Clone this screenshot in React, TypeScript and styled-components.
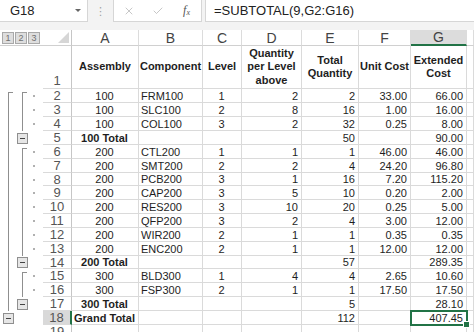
import React from 'react';
import styled, { createGlobalStyle, css } from 'styled-components';
import { X, Check } from 'lucide-react';

const GlobalStyle = createGlobalStyle`
  html, body { margin: 0; padding: 0; background: #fff; }
  body { font-family: "Liberation Sans", Arial, sans-serif; }
`;

const GREEN = '#217346';
const GRID = '#dadada';
const LINE = '#8f8f8f';

const Page = styled.div`
  width: 474px;
  height: 332px;
  overflow: hidden;
  display: flex;
  flex-direction: column;
  background: #fff;
`;

const FormulaBar = styled.div`
  flex: 0 0 30px;
  display: flex;
  align-items: flex-start;
  background: #f3f3f3;
`;

const NameBox = styled.div`
  width: 88px;
  height: 22px;
  box-sizing: border-box;
  background: #fff;
  border: 1px solid #d6d6d6;
  border-top: none;
  border-left: none;
  display: flex;
  align-items: center;
  justify-content: space-between;
  padding: 0 6px 0 10px;
  font-size: 13px;
  color: #222;
`;

const Caret = styled.span`
  width: 0;
  height: 0;
  border-left: 3px solid transparent;
  border-right: 3px solid transparent;
  border-top: 3px solid #666;
`;

const Grip = styled.div`
  width: 25px;
  height: 22px;
  display: flex;
  align-items: center;
  justify-content: center;
  font-family: "DejaVu Sans", sans-serif;
  font-size: 11px;
  color: #a0a0a0;
`;

const ActionBox = styled.div`
  width: 89px;
  height: 22px;
  box-sizing: border-box;
  background: #fff;
  border: 1px solid #d6d6d6;
  border-top: none;
  display: flex;
`;

const ActionSlot = styled.div`
  width: 30px;
  display: flex;
  align-items: center;
  justify-content: center;
  color: #a8a8a8;
`;

const Fx = styled.span`
  font-family: "Liberation Serif", serif;
  font-style: italic;
  font-size: 12px;
  color: #555;
  sub { font-size: 8px; vertical-align: -1px; }
`;

const FormulaInput = styled.div`
  flex: 1;
  margin-left: 3px;
  height: 22px;
  box-sizing: border-box;
  background: #fff;
  border-left: 1px solid #d6d6d6;
  border-bottom: 1px solid #d6d6d6;
  display: flex;
  align-items: center;
  padding-left: 8px;
  font-size: 13px;
  color: #222;
`;

const Sheet = styled.div<{ $rows: string }>`
  display: grid;
  grid-template-columns: 43px 29px 67px 64px 39px 60px 57px 52px 56px 1fr;
  grid-template-rows: ${p => p.$rows};
`;

const OutlineHead = styled.div`
  display: flex;
  align-items: center;
  gap: 1px;
  padding-left: 2px;
  border-bottom: 1px solid #d0d0d0;
`;

const LevelButton = styled.div`
  width: 12px;
  height: 12px;
  box-sizing: border-box;
  border: 1px solid #a9a9a9;
  background: #dedede;
  display: flex;
  align-items: center;
  justify-content: center;
  font-size: 9px;
  color: #707070;
`;

const Corner = styled.div`
  display: flex;
  justify-content: flex-end;
  align-items: flex-end;
  padding: 0 2px 2px 0;
  border-right: 1px solid #c6c6c6;
  border-bottom: 1px solid #d0d0d0;
`;

const CornerTriangle = styled.span`
  width: 0;
  height: 0;
  border-left: 11px solid transparent;
  border-bottom: 11px solid #d6d6d6;
`;

const ColHead = styled.div<{ $selected?: boolean }>`
  display: flex;
  align-items: center;
  justify-content: center;
  font-size: 14px;
  color: #444;
  box-sizing: border-box;
  border-right: 1px solid #dcdcdc;
  border-bottom: 1px solid #d0d0d0;
  background: #fff;
  ${p => p.$selected && css`
    background: #dcdcdc;
    border-bottom: 2px solid ${GREEN};
  `}
`;

const RowHead = styled.div<{ $selected?: boolean; $bottom?: boolean }>`
  display: flex;
  align-items: ${p => (p.$bottom ? 'flex-end' : 'center')};
  justify-content: center;
  padding-bottom: ${p => (p.$bottom ? '2px' : '0')};
  font-size: 13px;
  line-height: 11px;
  color: #555;
  box-sizing: border-box;
  border-right: 1px solid #c6c6c6;
  border-bottom: 1px solid ${GRID};
  ${p => p.$selected && css`
    background: #d9d9d9;
    border-right: 2px solid ${GREEN};
  `}
`;

type Align = 'left' | 'center' | 'right';

const Cell = styled.div<{ $align?: Align; $bold?: boolean; $header?: boolean; $selected?: boolean }>`
  position: relative;
  display: flex;
  align-items: center;
  justify-content: ${p => (p.$align === 'right' ? 'flex-end' : p.$align === 'center' ? 'center' : 'flex-start')};
  text-align: ${p => p.$align || 'left'};
  box-sizing: border-box;
  border-right: 1px solid ${GRID};
  border-bottom: 1px solid ${GRID};
  padding: ${p => (p.$header ? '0 1px' : '0 3px 0 2px')};
  font-size: 11px;
  line-height: ${p => (p.$header ? '13.5px' : '12px')};
  font-weight: ${p => (p.$bold ? 700 : 400)};
  color: #1e1e1e;
  white-space: ${p => (p.$header ? 'normal' : 'nowrap')};
  ${p => p.$selected && css`
    outline: 2px solid ${GREEN};
    outline-offset: -1px;
    z-index: 1;
  `}
`;

const FillHandle = styled.span`
  position: absolute;
  right: -4px;
  bottom: -4px;
  width: 5px;
  height: 5px;
  background: ${GREEN};
  border: 1px solid #fff;
`;

const OutlineCell = styled.div`
  display: flex;
  align-items: stretch;
`;

type Kind = 'start' | 'line' | 'button' | 'none';

const Track = styled.div<{ $kind: Kind; $w: number; $x: number }>`
  flex: none;
  width: ${p => p.$w}px;
  display: flex;
  align-items: center;
  ${p => p.$kind === 'line' && css`
    background: linear-gradient(${LINE}, ${LINE}) no-repeat ${p.$x}px 0 / 1px 100%;
  `}
  ${p => p.$kind === 'start' && css`
    background:
      linear-gradient(${LINE}, ${LINE}) no-repeat ${p.$x}px 3px / 1px 100%,
      linear-gradient(${LINE}, ${LINE}) no-repeat ${p.$x}px 3px / 5px 1px;
  `}
`;

const MinusBox = styled.div<{ $x: number }>`
  margin-left: ${p => p.$x - 5}px;
  width: 11px;
  height: 11px;
  box-sizing: border-box;
  border: 1px solid ${LINE};
  background: #e6e6e6;
  display: flex;
  align-items: center;
  justify-content: center;
  &::before {
    content: '';
    width: 5px;
    height: 1px;
    background: #444;
  }
`;

const Dot = styled.span`
  margin-left: 4px;
  width: 2px;
  height: 2px;
  background: #b0b0b0;
`;

interface Row {
  n: number;
  a: string;
  b?: string;
  c?: string;
  d?: string;
  e?: string;
  f?: string;
  g?: string;
  total?: boolean;
  o: [Kind, Kind, boolean];
}

const rows: Row[] = [
  { n: 2, a: '100', b: 'FRM100', c: '1', d: '2', e: '2', f: '33.00', g: '66.00', o: ['start', 'start', true] },
  { n: 3, a: '100', b: 'SLC100', c: '2', d: '8', e: '16', f: '1.00', g: '16.00', o: ['line', 'line', true] },
  { n: 4, a: '100', b: 'COL100', c: '3', d: '2', e: '32', f: '0.25', g: '8.00', o: ['line', 'line', true] },
  { n: 5, a: '100 Total', e: '50', g: '90.00', total: true, o: ['line', 'button', false] },
  { n: 6, a: '200', b: 'CTL200', c: '1', d: '1', e: '1', f: '46.00', g: '46.00', o: ['line', 'start', true] },
  { n: 7, a: '200', b: 'SMT200', c: '2', d: '2', e: '4', f: '24.20', g: '96.80', o: ['line', 'line', true] },
  { n: 8, a: '200', b: 'PCB200', c: '3', d: '1', e: '16', f: '7.20', g: '115.20', o: ['line', 'line', true] },
  { n: 9, a: '200', b: 'CAP200', c: '3', d: '5', e: '10', f: '0.20', g: '2.00', o: ['line', 'line', true] },
  { n: 10, a: '200', b: 'RES200', c: '3', d: '10', e: '20', f: '0.25', g: '5.00', o: ['line', 'line', true] },
  { n: 11, a: '200', b: 'QFP200', c: '3', d: '2', e: '4', f: '3.00', g: '12.00', o: ['line', 'line', true] },
  { n: 12, a: '200', b: 'WIR200', c: '2', d: '1', e: '1', f: '0.35', g: '0.35', o: ['line', 'line', true] },
  { n: 13, a: '200', b: 'ENC200', c: '2', d: '1', e: '1', f: '12.00', g: '12.00', o: ['line', 'line', true] },
  { n: 14, a: '200 Total', e: '57', g: '289.35', total: true, o: ['line', 'button', false] },
  { n: 15, a: '300', b: 'BLD300', c: '1', d: '4', e: '4', f: '2.65', g: '10.60', o: ['line', 'start', true] },
  { n: 16, a: '300', b: 'FSP300', c: '2', d: '1', e: '1', f: '17.50', g: '17.50', o: ['line', 'line', true] },
  { n: 17, a: '300 Total', e: '5', g: '28.10', total: true, o: ['line', 'button', false] },
  { n: 18, a: 'Grand Total', e: '112', g: '407.45', total: true, o: ['button', 'none', false] },
];

const rowHeights = [14, 14, 14, 14, 14, 14, 13, 14, 14, 14, 14, 14, 13, 14, 14, 14, 14];

const OutlineTrack: React.FC<{ kind: Kind; w: number; x: number }> = ({ kind, w, x }) => (
  <Track $kind={kind} $w={w} $x={x}>
    {kind === 'button' && <MinusBox $x={x} />}
  </Track>
);

const cols = ['A', 'B', 'C', 'D', 'E', 'F', 'G'];

export default function App() {
  const template = `16px 43px ${rowHeights.map(h => `${h}px`).join(' ')} 14px`;
  return (
    <>
      <GlobalStyle />
      <Page>
        <FormulaBar>
          <NameBox>
            <span>G18</span>
            <Caret />
          </NameBox>
          <Grip>⋮</Grip>
          <ActionBox>
            <ActionSlot><X size={12} strokeWidth={1.3} /></ActionSlot>
            <ActionSlot><Check size={12} strokeWidth={1.3} /></ActionSlot>
            <ActionSlot><Fx>f<sub>x</sub></Fx></ActionSlot>
          </ActionBox>
          <FormulaInput>=SUBTOTAL(9,G2:G16)</FormulaInput>
        </FormulaBar>
        <Sheet $rows={template}>
          <OutlineHead>
            <LevelButton>1</LevelButton>
            <LevelButton>2</LevelButton>
            <LevelButton>3</LevelButton>
          </OutlineHead>
          <Corner><CornerTriangle /></Corner>
          {cols.map(c => (
            <ColHead key={c} $selected={c === 'G'}>{c}</ColHead>
          ))}
          <ColHead />

          <OutlineCell />
          <RowHead $bottom>1</RowHead>
          <Cell $header $bold $align="center">Assembly</Cell>
          <Cell $header $bold $align="center">Component</Cell>
          <Cell $header $bold $align="center">Level</Cell>
          <Cell $header $bold $align="center">Quantity per Level above</Cell>
          <Cell $header $bold $align="center">Total Quantity</Cell>
          <Cell $header $bold $align="center">Unit Cost</Cell>
          <Cell $header $bold $align="center">Extended Cost</Cell>
          <Cell />

          {rows.map(r => (
            <React.Fragment key={r.n}>
              <OutlineCell>
                <OutlineTrack kind={r.o[0]} w={15} x={8} />
                <OutlineTrack kind={r.o[1]} w={14} x={7} />
                <Track $kind="none" $w={14} $x={4}>{r.o[2] && <Dot />}</Track>
              </OutlineCell>
              <RowHead $selected={r.n === 18}>{r.n}</RowHead>
              <Cell $align="center" $bold={r.total}>{r.a}</Cell>
              <Cell>{r.b}</Cell>
              <Cell $align="center">{r.c}</Cell>
              <Cell $align="right">{r.d}</Cell>
              <Cell $align="right">{r.e}</Cell>
              <Cell $align="right">{r.f}</Cell>
              <Cell $align="right" $selected={r.n === 18}>
                {r.g}
                {r.n === 18 && <FillHandle />}
              </Cell>
              <Cell />
            </React.Fragment>
          ))}

          <OutlineCell />
          <RowHead>19</RowHead>
          <Cell />
          <Cell />
          <Cell />
          <Cell />
          <Cell />
          <Cell />
          <Cell />
          <Cell />
        </Sheet>
      </Page>
    </>
  );
}
